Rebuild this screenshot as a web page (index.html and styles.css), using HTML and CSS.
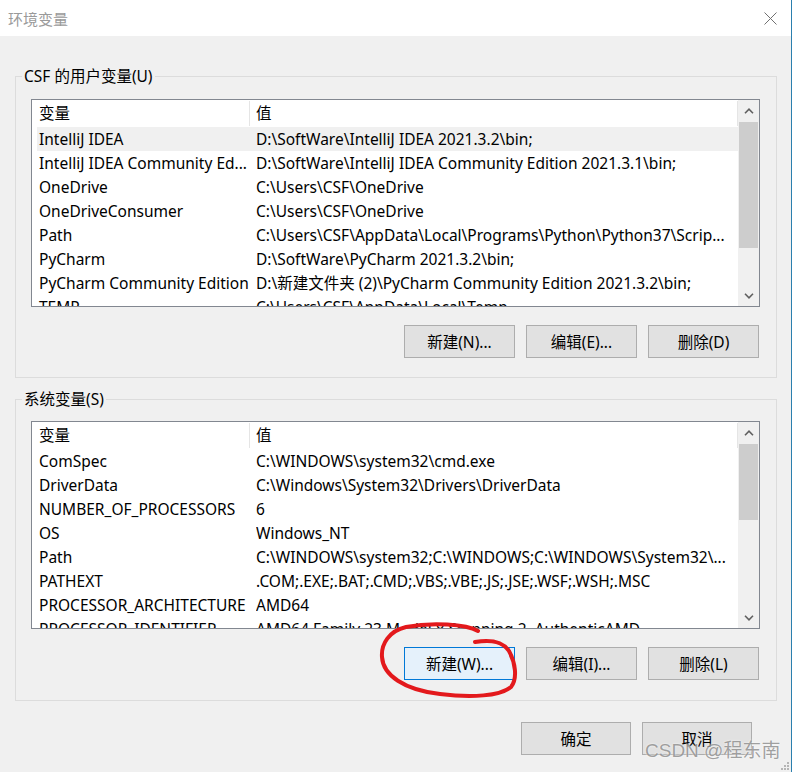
FILE: index.html
```html
<!DOCTYPE html>
<html lang="zh-CN">
<head>
    <meta charset="UTF-8">
    <meta name="viewport" content="width=device-width, initial-scale=1.0">
    <title>环境变量</title>
    <link rel="stylesheet" href="styles.css">
</head>
<body>

<div class="window">
    <div class="titlebar">
        <span class="title">环境变量</span>
        <svg class="close" width="13" height="13" viewBox="0 0 13 13"><path d="M0.5 0.5L12.5 12.5M12.5 0.5L0.5 12.5"/></svg>
    </div>

    <div class="main">
        <!-- user variables -->
        <fieldset class="group">
            <legend>CSF 的用户变量(U)</legend>
            <div class="list">
                <div class="table">
                    <div class="head"><div class="name">变量</div><div class="value">值</div></div>
                    <div class="row selected"><div class="name">IntelliJ IDEA</div><div class="value">D:\SoftWare\IntelliJ IDEA 2021.3.2\bin;</div></div>
                    <div class="row"><div class="name">IntelliJ IDEA Community Ed...</div><div class="value">D:\SoftWare\IntelliJ IDEA Community Edition 2021.3.1\bin;</div></div>
                    <div class="row"><div class="name">OneDrive</div><div class="value">C:\Users\CSF\OneDrive</div></div>
                    <div class="row"><div class="name">OneDriveConsumer</div><div class="value">C:\Users\CSF\OneDrive</div></div>
                    <div class="row"><div class="name">Path</div><div class="value">C:\Users\CSF\AppData\Local\Programs\Python\Python37\Scrip...</div></div>
                    <div class="row"><div class="name">PyCharm</div><div class="value">D:\SoftWare\PyCharm 2021.3.2\bin;</div></div>
                    <div class="row"><div class="name">PyCharm Community Edition</div><div class="value">D:\新建文件夹 (2)\PyCharm Community Edition 2021.3.2\bin;</div></div>
                    <div class="row"><div class="name">TEMP</div><div class="value">C:\Users\CSF\AppData\Local\Temp</div></div>
                </div>
                <div class="scrollbar">
                    <div class="arrow"><svg width="10" height="6" viewBox="0 0 10 6"><path d="M1 5.2L5 1.2L9 5.2"/></svg></div>
                    <div class="track"><div class="thumb" style="height: 126px"></div></div>
                    <div class="arrow"><svg width="10" height="6" viewBox="0 0 10 6"><path d="M1 0.8L5 4.8L9 0.8"/></svg></div>
                </div>
            </div>
            <div class="buttons">
                <button class="btn">新建(N)...</button>
                <button class="btn">编辑(E)...</button>
                <button class="btn">删除(D)</button>
            </div>
        </fieldset>

        <!-- system variables -->
        <fieldset class="group">
            <legend>系统变量(S)</legend>
            <div class="list">
                <div class="table">
                    <div class="head"><div class="name">变量</div><div class="value">值</div></div>
                    <div class="row"><div class="name">ComSpec</div><div class="value">C:\WINDOWS\system32\cmd.exe</div></div>
                    <div class="row"><div class="name">DriverData</div><div class="value">C:\Windows\System32\Drivers\DriverData</div></div>
                    <div class="row"><div class="name">NUMBER_OF_PROCESSORS</div><div class="value">6</div></div>
                    <div class="row"><div class="name">OS</div><div class="value">Windows_NT</div></div>
                    <div class="row"><div class="name">Path</div><div class="value">C:\WINDOWS\system32;C:\WINDOWS;C:\WINDOWS\System32\...</div></div>
                    <div class="row"><div class="name">PATHEXT</div><div class="value">.COM;.EXE;.BAT;.CMD;.VBS;.VBE;.JS;.JSE;.WSF;.WSH;.MSC</div></div>
                    <div class="row"><div class="name">PROCESSOR_ARCHITECTURE</div><div class="value">AMD64</div></div>
                    <div class="row"><div class="name">PROCESSOR_IDENTIFIER</div><div class="value">AMD64 Family 23 Model 8 Stepping 2, AuthenticAMD</div></div>
                </div>
                <div class="scrollbar">
                    <div class="arrow"><svg width="10" height="6" viewBox="0 0 10 6"><path d="M1 5.2L5 1.2L9 5.2"/></svg></div>
                    <div class="track"><div class="thumb" style="height: 76px"></div></div>
                    <div class="arrow"><svg width="10" height="6" viewBox="0 0 10 6"><path d="M1 0.8L5 4.8L9 0.8"/></svg></div>
                </div>
            </div>
            <div class="buttons">
                <button class="btn hover">新建(W)...</button>
                <button class="btn">编辑(I)...</button>
                <button class="btn">删除(L)</button>
            </div>
        </fieldset>

        <div class="footer">
            <button class="btn">确定</button>
            <button class="btn">取消</button>
        </div>
    </div>

    <!-- hand drawn mark over the button -->
    <svg class="scribble" width="792" height="772" viewBox="0 0 792 772">
        <path d="M478 631 C466 624 432 622 406 627 C389 631 381 644 382 657 C383 675 404 690 440 694 C472 698 500 696 511 687 C518 678 515 662 509 651 C503 642 493 639 475 642"/>
    </svg>

    <div class="watermark">CSDN @程东南</div>

    <svg class="grip" width="9" height="9" viewBox="0 0 9 9">
        <rect x="7" y="1" width="2" height="2"/>
        <rect x="4" y="4" width="2" height="2"/><rect x="7" y="4" width="2" height="2"/>
        <rect x="1" y="7" width="2" height="2"/><rect x="4" y="7" width="2" height="2"/><rect x="7" y="7" width="2" height="2"/>
    </svg>
</div>

</body>
</html>
```

FILE: styles.css
```css
* {
    box-sizing: border-box;
}
body {
    margin: 0;
    font-family: "Noto Sans", "Noto Sans CJK SC", sans-serif;
    font-size: 15.5px;
    color: #000;
    background-color: #f0f0f0;
}
.window {
    position: relative;
    width: 792px;
    height: 772px;
    background-color: #f0f0f0;
    border-right: 1px solid #2b7fae;
    overflow: hidden;
}
.titlebar {
    height: 36px;
    background-color: #fff;
    display: flex;
    align-items: center;
    justify-content: space-between;
    padding: 0 14px 0 8px;
}
.title {
    color: #9a9a9a;
    font-size: 15px;
}
.close path {
    stroke: #707070;
    stroke-width: 1;
    fill: none;
}
.main {
    padding: 0 14px 0 15px;
}
.group {
    margin: 30px 0 0;
    padding: 13px 16px 19px 15px;
    border: 1px solid #dcdcdc;
    min-width: 0;
}
.group + .group {
    margin-top: 11px;
    padding-top: 12px;
    padding-bottom: 20px;
}
.group legend {
    padding: 0 2px;
    margin-left: -9px;
    line-height: 20px;
}
.list {
    display: flex;
    height: 208px;
    background-color: #fff;
    border: 1px solid #828790;
    overflow: hidden;
}
.table {
    flex: 1;
    min-width: 0;
}
.head {
    display: flex;
    height: 27px;
    align-items: center;
}
.head .name {
    width: 218px;
    flex: none;
    padding-left: 7px;
    height: 25px;
    line-height: 25px;
    border-right: 1px solid #e5e5e5;
}
.head .value {
    flex: 1;
    padding-left: 6px;
    height: 25px;
    line-height: 25px;
    border-right: 1px solid #e5e5e5;
}
.row {
    display: flex;
    height: 24px;
    line-height: 24px;
    margin-left: 5px;
    white-space: nowrap;
}
.row.selected {
    background-color: #f0f0f0;
}
.row .name {
    width: 219px;
    flex: none;
    padding-left: 2px;
    overflow: hidden;
}
.row .value {
    flex: 1;
    overflow: hidden;
}
.scrollbar {
    width: 21px;
    flex: none;
    display: flex;
    flex-direction: column;
    background-color: #f0f0f0;
}
.arrow {
    height: 21px;
    display: flex;
    align-items: center;
    justify-content: center;
}
.arrow path {
    stroke: #606060;
    stroke-width: 1.6;
    fill: none;
}
.track {
    flex: 1;
}
.thumb {
    margin: 1px 1px 0;
    background-color: #cdcdcd;
}
.buttons {
    display: flex;
    justify-content: flex-end;
    gap: 11px;
    margin-top: 18px;
    padding-right: 1px;
}
.btn {
    width: 111px;
    height: 33px;
    padding: 0;
    border: 1px solid #adadad;
    background-color: #e1e1e1;
    font: inherit;
    color: #000;
}
.btn.hover {
    background-color: #e5f1fb;
    border-color: #0078d7;
}
.footer {
    display: flex;
    justify-content: flex-end;
    gap: 11px;
    margin-top: 21px;
    padding-right: 25px;
}
.footer .btn {
    width: 110px;
}
.scribble {
    position: absolute;
    left: 0;
    top: 0;
    pointer-events: none;
}
.scribble path {
    fill: none;
    stroke: #e3191c;
    stroke-width: 4;
    stroke-linecap: round;
    stroke-linejoin: round;
}
.watermark {
    position: absolute;
    left: 645px;
    top: 739px;
    font-family: "Liberation Sans", "Noto Sans CJK SC", sans-serif;
    font-size: 19px;
    line-height: 24px;
    color: rgba(130, 130, 130, 0.75);
    text-shadow: 0 0 2px #fff;
}
.grip {
    position: absolute;
    right: 2px;
    bottom: 2px;
}
.grip rect {
    fill: #b5b5b5;
}
```
